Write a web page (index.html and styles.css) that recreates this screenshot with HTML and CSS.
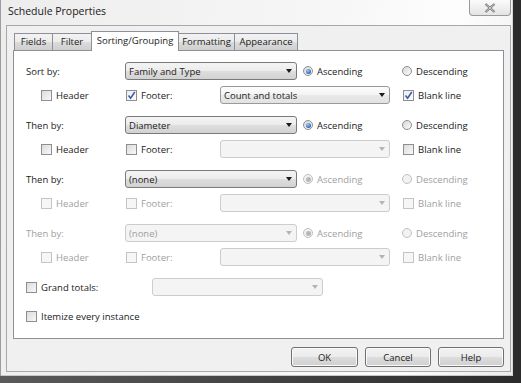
FILE: index.html
```html
<!DOCTYPE html>
<html lang="en">
<head>
<meta charset="UTF-8">
<title>Schedule Properties</title>
<link rel="stylesheet" href="styles.css">
</head>
<body>

<div class="window">
  <div class="titlebar">
    <span class="title">Schedule Properties</span>
    <span class="close">
      <svg width="12" height="10" viewBox="0 0 12 10"><path d="M1.5 1 L10.5 9 M10.5 1 L1.5 9" stroke="#6d6d6d" stroke-width="2.2" fill="none"/><path d="M1.5 1 L10.5 9 M10.5 1 L1.5 9" stroke="#e8e8e8" stroke-width="0.8" fill="none"/></svg>
    </span>
  </div>

  <div class="client">
    <div class="tabs">
      <span class="tab t-fields">Fields</span>
      <span class="tab t-filter">Filter</span>
      <span class="tab active t-sorting">Sorting/Grouping</span>
      <span class="tab t-format">Formatting</span>
      <span class="tab t-appear">Appearance</span>
    </div>

    <div class="panel">
      <div class="group">
        <div class="row main">
          <span class="label">Sort by:</span>
          <div class="combo"><span>Family and Type</span><i class="arrow"></i></div>
          <span class="opt"><span class="radio on"></span>Ascending</span>
          <span class="opt"><span class="radio"></span>Descending</span>
        </div>
        <div class="row sub">
          <span class="opt"><span class="check"></span>Header</span>
          <span class="opt"><span class="check on"><svg width="9" height="9" viewBox="0 0 9 9"><path d="M1.5 4.5 L3.6 7.2 L7.8 1" stroke="#3b5aa0" stroke-width="1.5" fill="none"/></svg></span>Footer:</span>
          <div class="combo list"><span>Count and totals</span><i class="arrow"></i></div>
          <span class="opt"><span class="check on"><svg width="9" height="9" viewBox="0 0 9 9"><path d="M1.5 4.5 L3.6 7.2 L7.8 1" stroke="#3b5aa0" stroke-width="1.5" fill="none"/></svg></span>Blank line</span>
        </div>
      </div>

      <div class="group">
        <div class="row main">
          <span class="label">Then by:</span>
          <div class="combo"><span>Diameter</span><i class="arrow"></i></div>
          <span class="opt"><span class="radio on"></span>Ascending</span>
          <span class="opt"><span class="radio"></span>Descending</span>
        </div>
        <div class="row sub">
          <span class="opt"><span class="check"></span>Header</span>
          <span class="opt"><span class="check"></span>Footer:</span>
          <div class="combo off"><span></span><i class="arrow"></i></div>
          <span class="opt"><span class="check"></span>Blank line</span>
        </div>
      </div>

      <div class="group">
        <div class="row main">
          <span class="label">Then by:</span>
          <div class="combo"><span>(none)</span><i class="arrow"></i></div>
          <span class="opt dim"><span class="radio on off"></span>Ascending</span>
          <span class="opt dim"><span class="radio off"></span>Descending</span>
        </div>
        <div class="row sub">
          <span class="opt dim"><span class="check off"></span>Header</span>
          <span class="opt dim"><span class="check off"></span>Footer:</span>
          <div class="combo off"><span></span><i class="arrow"></i></div>
          <span class="opt dim"><span class="check off"></span>Blank line</span>
        </div>
      </div>

      <div class="group">
        <div class="row main">
          <span class="label dim">Then by:</span>
          <div class="combo off"><span>(none)</span><i class="arrow"></i></div>
          <span class="opt dim"><span class="radio on off"></span>Ascending</span>
          <span class="opt dim"><span class="radio off"></span>Descending</span>
        </div>
        <div class="row sub">
          <span class="opt dim"><span class="check off"></span>Header</span>
          <span class="opt dim"><span class="check off"></span>Footer:</span>
          <div class="combo off"><span></span><i class="arrow"></i></div>
          <span class="opt dim"><span class="check off"></span>Blank line</span>
        </div>
      </div>

      <div class="row totals">
        <span class="opt"><span class="check"></span>Grand totals:</span>
        <div class="combo off"><span></span><i class="arrow"></i></div>
      </div>
      <div class="row itemize">
        <span class="opt"><span class="check"></span>Itemize every instance</span>
      </div>
    </div>

    <div class="buttons">
      <button class="btn ok">OK</button>
      <button class="btn">Cancel</button>
      <button class="btn">Help</button>
    </div>
  </div>
</div>

</body>
</html>
```

FILE: styles.css
```css
body {
  margin: 0;
  width: 521px;
  height: 383px;
  overflow: hidden;
  background: linear-gradient(to right, #5a5a5a, #2b2b2b);
  font-family: "Open Sans", "Noto Sans", sans-serif;
  font-size: 9.5px;
  color: #222;
}
.window {
  width: 513px;
  height: 376px;
  border-left: 1px solid #9c9c9c;
  border-right: 1px solid #d8d8d8;
  background: linear-gradient(100deg, #ededed 0%, #f6f6f6 55%, #fdfdfd 80%, #ececec 100%);
  box-sizing: border-box;
  box-shadow: inset 0 -1px 0 #c8c8c8;
}
.titlebar {
  height: 25px;
  display: flex;
  justify-content: space-between;
  align-items: flex-start;
}
.title {
  margin: 4px 0 0 7px;
  font-size: 10.5px;
  color: #202020;
}
.close {
  width: 40px;
  height: 15px;
  margin-right: 1px;
  border: 1px solid #9a9a9a;
  border-top: none;
  border-radius: 0 0 4px 4px;
  background: linear-gradient(#fbfbfb, #e4e4e4);
  display: flex;
  align-items: center;
  justify-content: center;
}
.client {
  width: 505px;
  margin-left: 5px;
  box-sizing: border-box;
  border: 1px solid #a8a8a8;
  background: #f0f0f0;
  padding: 5px 6px 4px 6px;
}
.tabs {
  height: 19px;
  display: flex;
  align-items: flex-end;
  padding-left: 1px;
}
.tab {
  height: 16px;
  line-height: 15px;
  margin-right: -1px;
  border: 1px solid #8d9099;
  border-bottom: none;
  background: linear-gradient(#f3f3f3 0%, #ebebeb 50%, #dcdcdc 51%, #cfcfcf 100%);
  text-align: center;
}
.t-fields { width: 37px; }
.t-filter { width: 38px; }
.t-sorting { width: 86px; }
.t-format { width: 55px; }
.t-appear { width: 62px; }
.tab.active {
  height: 19px;
  line-height: 17px;
  margin: 0 -1px -1px 0;
  background: #fff;
  position: relative;
  z-index: 1;
}
.panel {
  height: 268px;
  border: 1px solid #8d9099;
  background: #fff;
  padding: 11px 12px 8px 12px;
}
.group {
  display: flex;
  flex-direction: column;
  gap: 6px;
  margin-bottom: 12px;
}
.row {
  height: 18px;
  display: grid;
  align-items: center;
}
.main {
  grid-template-columns: 99px 178px 99px 1fr;
}
.sub {
  padding-left: 15px;
  grid-template-columns: 85px 94px 183px 1fr;
}
.totals {
  margin-top: 4px;
  grid-template-columns: 126px 1fr;
}
.itemize {
  margin-top: 11px;
}
.opt {
  display: flex;
  align-items: center;
}
.dim {
  color: #a0a0a0;
}
.combo {
  height: 16px;
  border: 1px solid #7a7a7a;
  border-radius: 3px;
  background: linear-gradient(#f4f4f4 0%, #ececec 50%, #dedede 51%, #d2d2d2 100%);
  display: flex;
  align-items: center;
  justify-content: space-between;
  padding: 0 4px 0 3px;
  box-sizing: content-box;
}
.main .combo {
  width: 163px;
}
.sub .combo {
  width: 161px;
}
.totals .combo {
  width: 162px;
}
.combo.list {
  border-color: #9a9a9a;
  background: linear-gradient(#fdfdfd 0%, #f3f3f3 50%, #e9e9e9 51%, #e2e2e2 100%);
}
.combo.off {
  border-color: #cdcdcd;
  background: #f4f4f4;
  color: #a0a0a0;
}
.arrow {
  width: 0;
  height: 0;
  border-left: 3.5px solid transparent;
  border-right: 3.5px solid transparent;
  border-top: 4px solid #1a1a1a;
}
.combo.off .arrow {
  border-top-color: #b4b4b4;
}
.check {
  width: 9px;
  height: 9px;
  margin-right: 4px;
  border: 1px solid #8e8f8f;
  background: linear-gradient(135deg, #dcdcdc, #f8f8f8);
  display: flex;
  align-items: center;
  justify-content: center;
}
.check.on {
  background: linear-gradient(135deg, #e9eef6, #fbfbfb);
}
.check.off {
  border-color: #c4c4c4;
  background: #f6f6f6;
}
.radio {
  width: 10px;
  height: 10px;
  margin-right: 4px;
  border: 1px solid #8e8f8f;
  border-radius: 50%;
  background: linear-gradient(135deg, #d8d8d8, #fafafa);
  box-sizing: border-box;
  display: flex;
  align-items: center;
  justify-content: center;
}
.radio.on::after {
  content: "";
  width: 5px;
  height: 5px;
  border-radius: 50%;
  background: radial-gradient(circle at 40% 35%, #9fd0ff, #2a62b8 70%);
}
.radio.off {
  border-color: #c0c0c0;
  background: #f2f2f2;
}
.radio.on.off::after {
  background: #b8b8b8;
}
.buttons {
  margin-top: 8px;
  display: flex;
  justify-content: flex-end;
  gap: 7px;
}
.btn {
  width: 66px;
  height: 20px;
  padding: 0;
  font-family: inherit;
  font-size: 9.5px;
  color: #222;
  border: 1px solid #707070;
  border-radius: 3px;
  background: linear-gradient(#f2f2f2 0%, #ebebeb 50%, #dddddd 51%, #cfcfcf 100%);
  box-shadow: inset 0 0 0 1px #fafafa;
}
.btn.ok {
  width: 67px;
}
```
